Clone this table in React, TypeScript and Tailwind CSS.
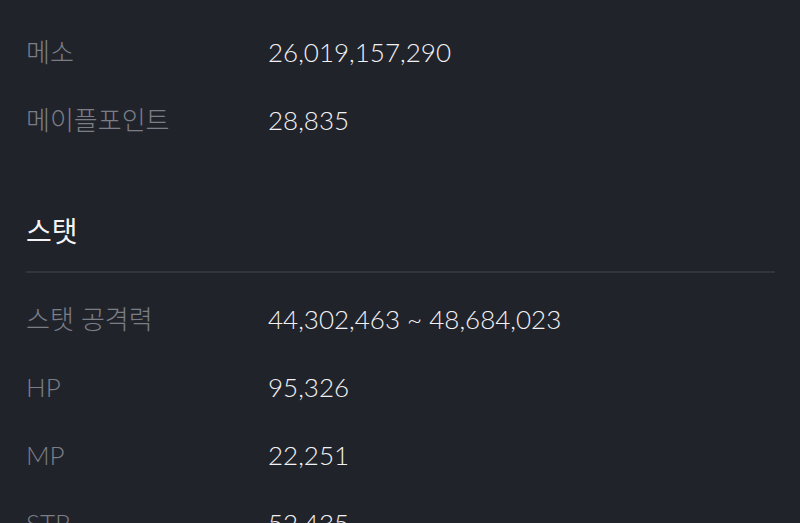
const basic = [
  { label: '메소', value: '26,019,157,290' },
  { label: '메이플포인트', value: '28,835' },
]

const stats = [
  { label: '스탯 공격력', value: '44,302,463 ~ 48,684,023' },
  { label: 'HP', value: '95,326' },
  { label: 'MP', value: '22,251' },
  { label: 'STR', value: '52,435' },
]

function Row({ label, value }: { label: string; value: string }) {
  return (
    <div className="flex h-[68px] items-center">
      <div className="w-[242px] shrink-0 text-[26px] font-light text-[#7b7e87]">{label}</div>
      <div className="text-[26px] font-light text-[#f2f2f4]">{value}</div>
    </div>
  )
}

export default function App() {
  return (
    <div
      className="h-[523px] w-[800px] overflow-hidden bg-[#21232b] pl-[26px] pr-[25px] pt-[18px]"
      style={{ fontFamily: 'Lato, "Noto Sans CJK KR", sans-serif' }}
    >
      {basic.map((r) => (
        <Row key={r.label} {...r} />
      ))}
      <h2 className="mt-[59px] h-[36px] text-[28px] font-normal leading-[36px] text-[#f4f4f6]">스탯</h2>
      <div className="mt-[22px] h-[2px] bg-[#33353d]" />
      <div className="pt-[12px]">
        {stats.map((r) => (
          <Row key={r.label} {...r} />
        ))}
      </div>
    </div>
  )
}
